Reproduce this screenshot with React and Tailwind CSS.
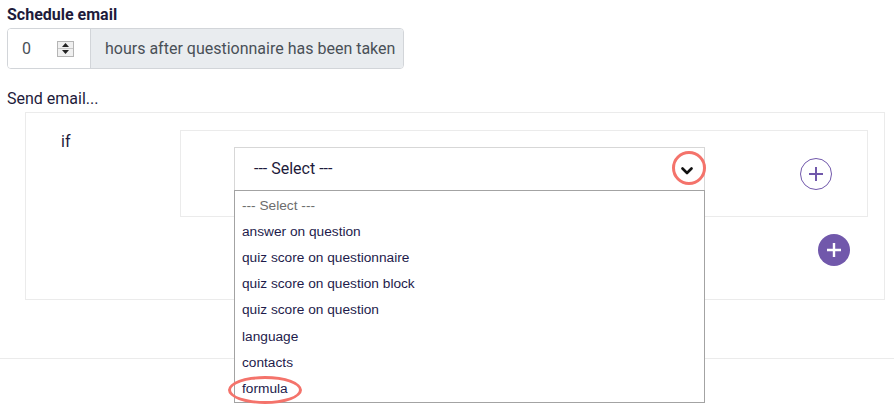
import React from "react";

function Spinner() {
  return (
    <div className="w-[17px] h-[16px] border border-[#b5b5b5] bg-[#f0f0f0] flex flex-col">
      <div className="flex-1 flex items-center justify-center border-b border-[#c8c8c8]">
        <svg width="7" height="4" viewBox="0 0 7 4"><path d="M0 4 L3.5 0 L7 4 Z" fill="#222" /></svg>
      </div>
      <div className="flex-1 flex items-center justify-center">
        <svg width="7" height="4" viewBox="0 0 7 4"><path d="M0 0 L3.5 4 L7 0 Z" fill="#222" /></svg>
      </div>
    </div>
  );
}

const items = [
  "answer on question",
  "quiz score on questionnaire",
  "quiz score on question block",
  "quiz score on question",
  "language",
  "contacts",
  "formula",
];

export default function App() {
  return (
    <div className="relative w-[894px] h-[414px] overflow-hidden bg-white font-['Roboto',sans-serif] text-[#1e1b3b]">
      <div className="pl-[7px] pt-[5px]">
        <div className="text-[16px] font-bold leading-[20px]">Schedule email</div>
        <div className="mt-[3px] flex w-[397px] h-[41px] rounded-[4px] border border-[#d2d5d9] overflow-hidden">
          <div className="w-[82px] flex items-center bg-white">
            <span className="ml-[14px] text-[16px] text-[#495057]">0</span>
            <div className="ml-[26px]">
              <Spinner />
            </div>
          </div>
          <div className="flex-1 flex items-center bg-[#e9ecef] border-l border-[#d2d5d9] pl-[14px] text-[16px] text-[#495057]">
            hours after questionnaire has been taken
          </div>
        </div>
        <div className="mt-[20px] text-[16px] leading-[20px]">Send email...</div>
      </div>

      <div className="ml-[25px] mt-[3px] w-[860px] h-[188px] border border-[#ebebeb] flex pt-[17px]">
        <div className="w-[154px] pl-[35px] text-[16px] leading-[20px] pt-[2px]">if</div>
        <div className="flex-1 mr-[16px] flex flex-col">
          <div className="h-[87px] border border-[#ebebeb] flex items-center pl-[53px] pr-[35px]">
            <div className="self-start mt-[16px] w-[471px] h-[43px] border border-[#d7d7d7] border-b-0 flex items-center pl-[19px] pr-[11px] text-[16px]">
              <span className="flex-1">--- Select ---</span>
              <svg width="12" height="8" viewBox="0 0 12 8" className="mt-[3px]">
                <path d="M1.5 1.5 L6 6 L10.5 1.5" fill="none" stroke="#111" strokeWidth="2.6" strokeLinecap="round" strokeLinejoin="round" />
              </svg>
            </div>
            <div className="ml-auto w-[32px] h-[32px] rounded-full border border-[#7158ab] flex items-center justify-center">
              <svg width="16" height="16" viewBox="0 0 16 16">
                <path d="M8 1 V15 M1 8 H15" stroke="#7158ab" strokeWidth="2" />
              </svg>
            </div>
          </div>
          <div className="flex justify-end mt-[17px] mr-[18px]">
            <div className="w-[32px] h-[32px] rounded-full bg-[#7158ab] flex items-center justify-center">
              <svg width="16" height="16" viewBox="0 0 16 16">
                <path d="M8 1 V15 M1 8 H15" stroke="#fff" strokeWidth="2.4" />
              </svg>
            </div>
          </div>
        </div>
      </div>

      <div className="mt-[58px] h-[1px] bg-[#ebebeb] w-full" />

      {/* dropdown list */}
      <div className="absolute left-[234px] top-[190px] w-[471px] h-[213px] border border-[#a3a3a3] bg-white pt-[2px] font-['Liberation_Sans',sans-serif] text-[13.7px]">
        <div className="h-[26px] flex items-center pl-[7px] text-[#6d6d6d]">--- Select ---</div>
        {items.map((t) => (
          <div key={t} className="h-[26.2px] flex items-center pl-[7px] text-[#1e1b4b]">
            {t}
          </div>
        ))}
      </div>

      {/* annotations */}
      <div className="absolute left-[672px] top-[151px] w-[34px] h-[34px] rounded-full border-[3px] border-[#f4736b]" />
      <div className="absolute left-[228px] top-[376px] w-[74px] h-[28px] rounded-[50%] border-[3px] border-[#f4736b]" />
    </div>
  );
}
